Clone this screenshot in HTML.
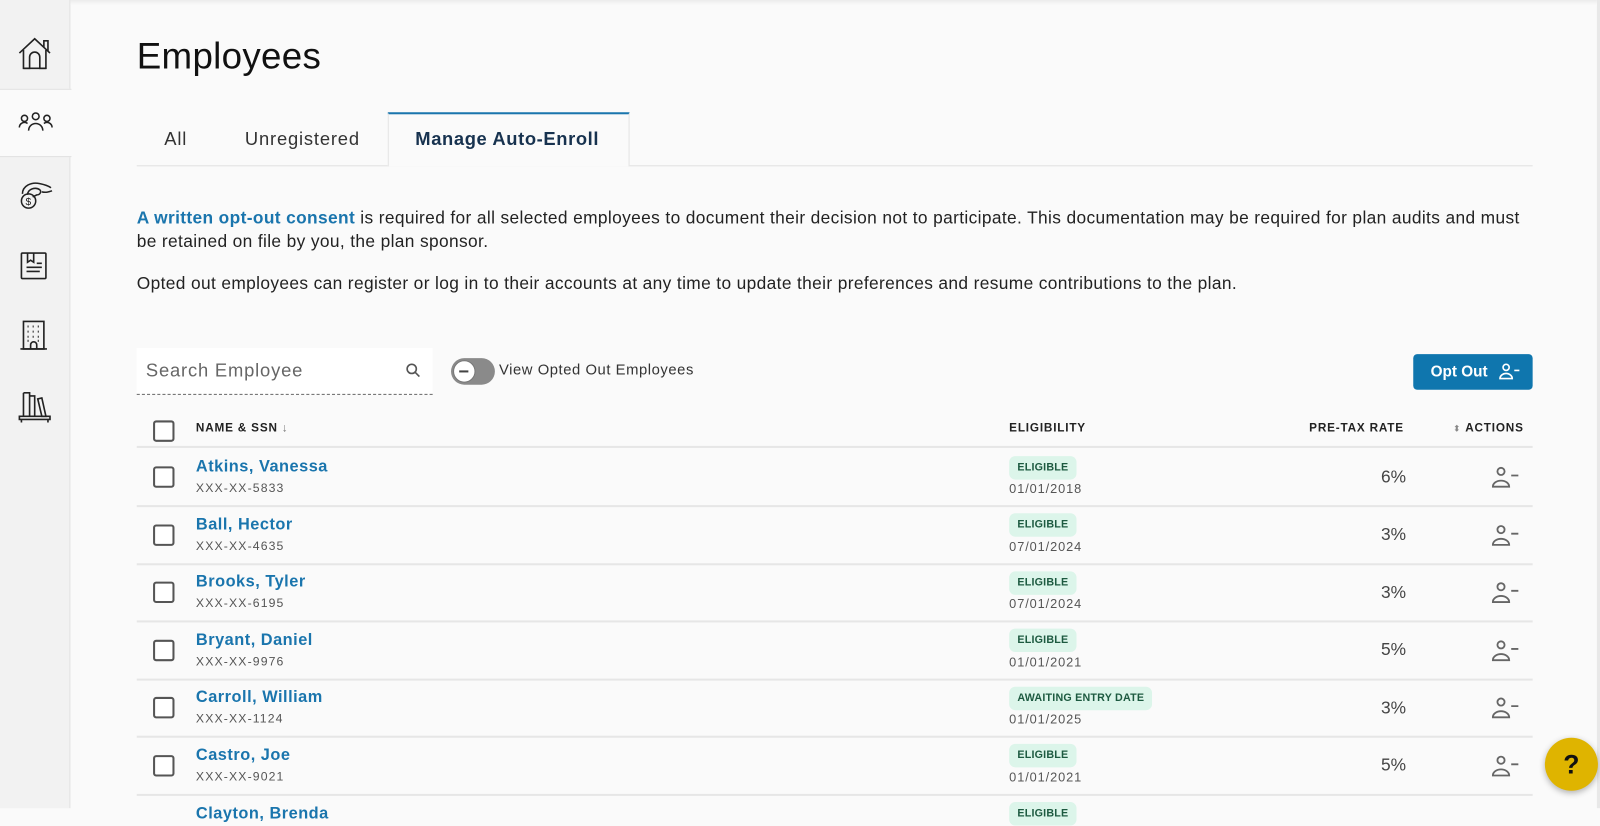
<!DOCTYPE html>
<html><head><meta charset="utf-8"><style>
*{box-sizing:border-box;margin:0;padding:0}
html,body{width:1600px;height:808px;overflow:hidden;background:#fafafa}
#w{position:absolute;left:0;top:0;width:1568px;height:792px;transform:scale(1.0204);transform-origin:0 0;font-family:"Liberation Sans",sans-serif;color:#1a1a1a}
.side{position:absolute;left:0;top:0;width:69px;height:792px;background:#f2f2f2;border-right:1px solid #e2e2e2}
.side .act{position:absolute;left:0;top:87px;width:70px;height:67px;background:#fafafa;border-top:1px solid #e0e0e0;border-bottom:1px solid #e0e0e0}
.side svg{position:absolute;left:17px}
.a{position:absolute;white-space:nowrap}
h1{position:absolute;left:134px;top:34px;font-size:36px;font-weight:normal;color:#111;letter-spacing:.3px}
.tabs{position:absolute;left:134px;top:162px;width:1368px;border-top:1px solid #e0e0e0}
.tab{position:absolute;top:126px;font-size:18px;color:#333;letter-spacing:.8px}
.acttab{position:absolute;left:380px;top:110px;width:237px;height:53px;border:1px solid #e4e4e4;border-top:2px solid #1a75ad;border-bottom:none;background:#fafafa}
p.t{position:absolute;left:134px;font-size:17px;letter-spacing:.35px;line-height:23px;color:#222;width:1375px}
.link{color:#1a75ad;font-weight:bold}
.search{position:absolute;left:134px;top:341px;width:290px;height:46px;background:#fff;border-bottom:1px dashed #666}
.hdr{position:absolute;top:414px;font-size:11.5px;font-weight:bold;letter-spacing:.8px;color:#222}
.line{position:absolute;left:134px;width:1368px;height:2px;background:#e6e6e6}
.cb{position:absolute;left:150px;width:21px;height:21px;border:2px solid #555;border-radius:3px;background:#fff}
.nm{position:absolute;left:192px;font-size:16px;font-weight:bold;color:#1a75ad;letter-spacing:.5px}
.ssn{position:absolute;left:192px;font-size:12px;color:#555;letter-spacing:1.1px}
.bd{position:absolute;left:989px;height:23px;line-height:23px;padding:0 8px;background:#dcf5ea;color:#1d5a40;font-size:10.5px;font-weight:bold;border-radius:6px;letter-spacing:.2px}
.dt{position:absolute;left:989px;font-size:12.5px;color:#555;letter-spacing:.9px}
.rt{position:absolute;right:190px;font-size:17px;color:#444}
.ic{position:absolute;left:1462px}
</style></head><body><div id="w">
<div class="side">
<div class="act"></div>
<svg style="top:35px" width="34" height="34" viewBox="0 0 34 34" fill="none" stroke="#222" stroke-width="1.6"><path d="M2 17 L17 3 L32 17"/><path d="M26 11 V5 h4 v10"/><path d="M6 14 V32 H12 V21 a5 5 0 0 1 10 0 V32 H28 V14"/><path d="M6 32 H28"/></svg>
<svg style="top:108px" width="36" height="26" viewBox="0 0 36 26" fill="none" stroke="#222" stroke-width="1.5"><circle cx="7" cy="8" r="3"/><circle cx="18" cy="6" r="3.3"/><circle cx="29" cy="8" r="3"/><path d="M2 17 a5 5 0 0 1 8 -4"/><path d="M34 17 a5 5 0 0 0 -8 -4"/><path d="M11 20 a7 7 0 0 1 14 0"/></svg>
<svg style="top:176px" width="36" height="32" viewBox="0 0 36 32" fill="none" stroke="#222" stroke-width="1.5"><path d="M5 14 C5 6 14 2 22 4 C27 5 30 6 33 8"/><path d="M10 15 C10 9 18 7 22 10 C24 12 22 15 19 15 L15 17"/><path d="M24 12 C28 13 31 12 34 11"/><circle cx="11" cy="21" r="7"/><text x="8" y="25" font-size="10" fill="#222" stroke="none" font-family="Liberation Sans">$</text></svg>
<svg style="top:244px" width="32" height="34" viewBox="0 0 32 34" fill="none" stroke="#222" stroke-width="1.6"><rect x="4" y="4" width="24" height="25" rx="1"/><path d="M10 4 V13 l3 -2 l3 2 V4"/><path d="M19 14 H24 M9 18 H24 M9 22 H22"/></svg>
<svg style="top:312px" width="32" height="34" viewBox="0 0 32 34" fill="none" stroke="#222" stroke-width="1.6"><rect x="6" y="3" width="20" height="27"/><path d="M3 30 H29"/><path d="M13 30 v-4 a3 3 0 0 1 6 0 v4"/><g stroke-width="2"><path d="M10 8h1M15 8h1M20 8h1M10 13h1M15 13h1M20 13h1M10 18h1M15 18h1M20 18h1M10 22h1M20 22h1"/></g></svg>
<svg style="top:380px" width="34" height="36" viewBox="0 0 34 36" fill="none" stroke="#222" stroke-width="1.6"><path d="M6 5 V28 M6 5 H12 V28 M12 8 H17 V28"/><path d="M20 11 L24 10 L28 28 H24 Z"/><path d="M2 28 H32 V31 H2 Z"/><path d="M4 31 v3 M30 31 v3"/></svg>
</div>
<div style="position:absolute;left:1565px;top:0;width:3px;height:792px;background:#e8e8e8"></div>
<div style="position:absolute;left:69px;top:0;width:1496px;height:5px;background:linear-gradient(#ececec,#fafafa)"></div>

<h1>Employees</h1>
<div class="tabs"></div>
<div class="acttab"></div>
<div class="a tab" style="left:161px">All</div>
<div class="a tab" style="left:240px">Unregistered</div>
<div class="a tab" style="left:407px;font-weight:bold;color:#17324f;letter-spacing:.6px">Manage Auto-Enroll</div>

<p class="t" style="top:202px"><span class="link">A written opt-out consent</span> is required for all selected employees to document their decision not to participate. This documentation may be required for plan audits and must be retained on file by you, the plan sponsor.</p>
<p class="t" style="top:266px">Opted out employees can register or log in to their accounts at any time to update their preferences and resume contributions to the plan.</p>

<div class="search"><span class="a" style="left:9px;top:12px;font-size:18px;color:#666;letter-spacing:.8px">Search Employee</span>
<svg style="position:absolute;left:263px;top:14px" width="16" height="16" viewBox="0 0 16 16" fill="none" stroke="#555" stroke-width="1.6"><circle cx="6.5" cy="6.5" r="4.5"/><path d="M10 10 L14 14"/></svg></div>
<div style="position:absolute;left:442px;top:351px;width:43px;height:26px;border-radius:13px;background:#8a8a8a"></div>
<div style="position:absolute;left:444px;top:353px;width:22px;height:22px;border-radius:11px;background:#fff;border:1.5px solid #777"><div style="position:absolute;left:5px;top:9px;width:9px;height:1.5px;background:#444"></div></div>
<div class="a" style="left:489px;top:355px;font-size:14.5px;color:#333;letter-spacing:.55px">View Opted Out Employees</div>

<div style="position:absolute;left:1385px;top:347px;width:117px;height:35px;background:#0f76ae;border-radius:4px;color:#fff;font-size:15px;font-weight:bold"><span class="a" style="left:17px;top:9px">Opt Out</span>
<svg style="position:absolute;left:84px;top:9px" width="22" height="16" viewBox="0 0 22 16" fill="none" stroke="#fff" stroke-width="1.6"><circle cx="7" cy="4" r="3"/><path d="M1 15 a6 5 0 0 1 12 0 Z"/><path d="M15 7 H20"/></svg></div>

<div class="cb" style="top:412px"></div>
<div class="a hdr" style="left:192px">NAME &amp; SSN <span style="font-weight:normal;color:#777">↓</span></div>
<div class="a hdr" style="left:989px">ELIGIBILITY</div>
<div class="a hdr" style="left:1283px">PRE-TAX RATE</div>
<div class="a hdr" style="left:1424px"><span style="font-weight:normal;color:#888;font-size:9px">⬍</span> ACTIONS</div>
<div class="line" style="top:437px"></div>

<div class="cb" style="top:457px"></div><div class="a nm" style="top:449px">Atkins, Vanessa</div><div class="a ssn" style="top:471px">XXX-XX-5833</div><div class="a bd" style="top:447px">ELIGIBLE</div><div class="a dt" style="top:472px">01/01/2018</div><div class="a rt" style="top:458px">6%</div><svg class="ic" style="top:457px" width="28" height="22" viewBox="0 0 28 22" fill="none" stroke="#666" stroke-width="1.8"><circle cx="9" cy="5" r="3.5"/><path d="M1 20 a8 6 0 0 1 16 0 Z"/><path d="M19 9 H26"/></svg><div class="line" style="top:495px"></div>
<div class="cb" style="top:514px"></div><div class="a nm" style="top:506px">Ball, Hector</div><div class="a ssn" style="top:528px">XXX-XX-4635</div><div class="a bd" style="top:503px">ELIGIBLE</div><div class="a dt" style="top:529px">07/01/2024</div><div class="a rt" style="top:514px">3%</div><svg class="ic" style="top:514px" width="28" height="22" viewBox="0 0 28 22" fill="none" stroke="#666" stroke-width="1.8"><circle cx="9" cy="5" r="3.5"/><path d="M1 20 a8 6 0 0 1 16 0 Z"/><path d="M19 9 H26"/></svg><div class="line" style="top:552px"></div>
<div class="cb" style="top:570px"></div><div class="a nm" style="top:562px">Brooks, Tyler</div><div class="a ssn" style="top:584px">XXX-XX-6195</div><div class="a bd" style="top:560px">ELIGIBLE</div><div class="a dt" style="top:585px">07/01/2024</div><div class="a rt" style="top:571px">3%</div><svg class="ic" style="top:570px" width="28" height="22" viewBox="0 0 28 22" fill="none" stroke="#666" stroke-width="1.8"><circle cx="9" cy="5" r="3.5"/><path d="M1 20 a8 6 0 0 1 16 0 Z"/><path d="M19 9 H26"/></svg><div class="line" style="top:608px"></div>
<div class="cb" style="top:627px"></div><div class="a nm" style="top:619px">Bryant, Daniel</div><div class="a ssn" style="top:641px">XXX-XX-9976</div><div class="a bd" style="top:616px">ELIGIBLE</div><div class="a dt" style="top:642px">01/01/2021</div><div class="a rt" style="top:627px">5%</div><svg class="ic" style="top:627px" width="28" height="22" viewBox="0 0 28 22" fill="none" stroke="#666" stroke-width="1.8"><circle cx="9" cy="5" r="3.5"/><path d="M1 20 a8 6 0 0 1 16 0 Z"/><path d="M19 9 H26"/></svg><div class="line" style="top:665px"></div>
<div class="cb" style="top:683px"></div><div class="a nm" style="top:675px">Carroll, William</div><div class="a ssn" style="top:697px">XXX-XX-1124</div><div class="a bd" style="top:673px">AWAITING ENTRY DATE</div><div class="a dt" style="top:698px">01/01/2025</div><div class="a rt" style="top:684px">3%</div><svg class="ic" style="top:683px" width="28" height="22" viewBox="0 0 28 22" fill="none" stroke="#666" stroke-width="1.8"><circle cx="9" cy="5" r="3.5"/><path d="M1 20 a8 6 0 0 1 16 0 Z"/><path d="M19 9 H26"/></svg><div class="line" style="top:721px"></div>
<div class="cb" style="top:740px"></div><div class="a nm" style="top:732px">Castro, Joe</div><div class="a ssn" style="top:754px">XXX-XX-9021</div><div class="a bd" style="top:729px">ELIGIBLE</div><div class="a dt" style="top:755px">01/01/2021</div><div class="a rt" style="top:740px">5%</div><svg class="ic" style="top:740px" width="28" height="22" viewBox="0 0 28 22" fill="none" stroke="#666" stroke-width="1.8"><circle cx="9" cy="5" r="3.5"/><path d="M1 20 a8 6 0 0 1 16 0 Z"/><path d="M19 9 H26"/></svg><div class="line" style="top:778px"></div>
<div class="a nm" style="top:789px">Clayton, Brenda</div><div class="a bd" style="top:786px">ELIGIBLE</div>

<div style="position:absolute;left:1514px;top:723px;width:52px;height:52px;border-radius:26px;background:#dfb400;box-shadow:0 2px 6px rgba(0,0,0,.3);text-align:center;line-height:52px;font-size:26px;font-weight:bold;color:#111">?</div>
</div></body></html>
